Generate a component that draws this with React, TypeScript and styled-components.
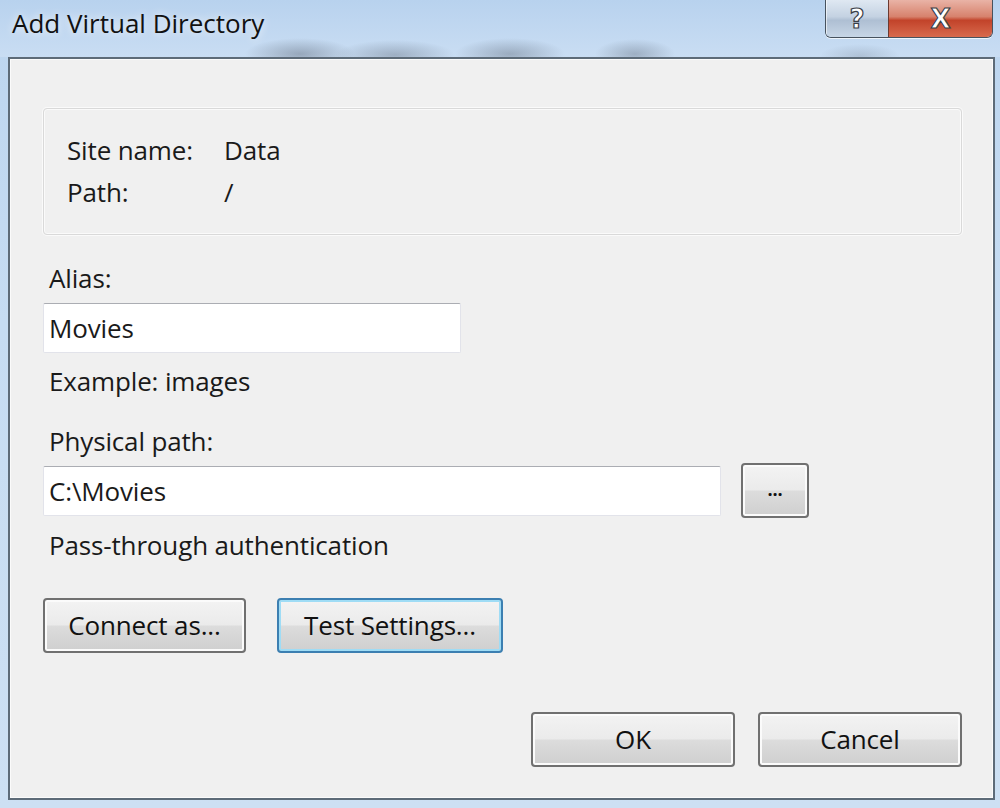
import React from "react";
import styled, { createGlobalStyle, css } from "styled-components";

const GlobalStyle = createGlobalStyle`
  html, body { margin: 0; padding: 0; }
  body {
    width: 1000px;
    height: 808px;
    overflow: hidden;
    font-family: "Open Sans", "Noto Sans", sans-serif;
    color: #1a1a1a;
  }
`;

const Window = styled.div`
  width: 1000px;
  height: 808px;
  display: flex;
  flex-direction: column;
  background: linear-gradient(180deg, #bcd5ef 0%, #c6dcf2 40%, #cde0f3 100%);
  box-sizing: border-box;
`;

const TitleBar = styled.div`
  height: 57px;
  flex: none;
  display: flex;
  justify-content: space-between;
  align-items: flex-start;
  background:
    radial-gradient(ellipse 55px 16px at 300px 54px, rgba(60, 70, 85, 0.35), transparent),
    radial-gradient(ellipse 60px 15px at 395px 55px, rgba(60, 70, 85, 0.3), transparent),
    radial-gradient(ellipse 55px 16px at 510px 54px, rgba(60, 70, 85, 0.32), transparent),
    radial-gradient(ellipse 40px 15px at 635px 54px, rgba(60, 70, 85, 0.3), transparent),
    radial-gradient(ellipse 40px 12px at 860px 56px, rgba(60, 70, 85, 0.18), transparent),
    linear-gradient(180deg, #b8d2ee 0%, #c9ddf3 100%);
`;

const Title = styled.div`
  padding: 5px 0 0 12px;
  font-size: 26px;
  letter-spacing: 0;
  color: #111;
  text-shadow: 0 0 8px rgba(255, 255, 255, 0.9);
`;

const CaptionButtons = styled.div`
  display: flex;
  margin-right: 7px;
  border: 1px solid #47525e;
  border-top: none;
  border-radius: 0 0 6px 6px;
  overflow: hidden;
  height: 37px;
  box-shadow: 0 1px 0 rgba(255, 255, 255, 0.7);
`;

const CaptionButton = styled.div<{ $close?: boolean }>`
  display: flex;
  align-items: center;
  justify-content: center;
  font-family: "DejaVu Sans", sans-serif;
  font-weight: bold;
  color: #fff;
  font-size: 26px;
  -webkit-text-stroke: 1.2px #3a3f47;
  ${(p) =>
    p.$close
      ? css`
          width: 103px;
          background: linear-gradient(180deg, #e9b3a6 0%, #d7826d 45%, #c2432a 55%, #d86a4d 100%);
          border-left: 1px solid #6b3a30;
        `
      : css`
          width: 62px;
          background: linear-gradient(180deg, #dfe8f2 0%, #c4d2e2 45%, #aebfd3 55%, #c7d6e6 100%);
          box-shadow: inset 1px 0 0 rgba(255,255,255,0.6);
        `}
`;

const Client = styled.div`
  margin: 0 5px 8px 8px;
  flex: 1;
  border: 2px solid #5d6b78;
  box-shadow: inset 0 0 0 1px #fbfbfb;
  background: #f0f0f0;
  display: flex;
  flex-direction: column;
  padding: 49px 31px 0 33px;
  font-size: 26px;
  letter-spacing: -0.15px;
`;

const GroupBox = styled.div`
  width: 919px;
  height: 127px;
  box-sizing: border-box;
  border: 1px solid #d9d9d9;
  border-radius: 4px;
  box-shadow: inset 0 0 0 1px #fafafa, 0 0 0 1px #fafafa;
  display: grid;
  grid-template-columns: 157px 1fr;
  grid-auto-rows: 42px;
  align-content: start;
  padding: 20px 0 0 23px;
`;

const Cell = styled.div`
  line-height: 42px;
  white-space: nowrap;
`;

const Label = styled.div<{ $mt: number }>`
  margin: ${(p) => p.$mt}px 0 0 6px;
  line-height: 30px;
  white-space: nowrap;
`;

const TextBox = styled.div<{ $w: number }>`
  width: ${(p) => p.$w}px;
  height: 50px;
  box-sizing: border-box;
  background: #fff;
  border: 1px solid #e2e3ea;
  border-top-color: #abadb3;
  border-radius: 2px;
  padding-left: 5px;
  display: flex;
  align-items: center;
  white-space: nowrap;
`;

const Row = styled.div<{ $mt: number; $end?: boolean; $gap: number }>`
  display: flex;
  align-items: center;
  margin-top: ${(p) => p.$mt}px;
  gap: ${(p) => p.$gap}px;
  justify-content: ${(p) => (p.$end ? "flex-end" : "flex-start")};
`;

const Button = styled.div<{ $w: number; $focus?: boolean; $small?: boolean }>`
  width: ${(p) => p.$w}px;
  height: 55px;
  box-sizing: border-box;
  border-radius: 4px;
  display: flex;
  align-items: center;
  justify-content: center;
  white-space: nowrap;
  font-size: ${(p) => (p.$small ? "18px" : "26px")};
  font-weight: ${(p) => (p.$small ? "bold" : "normal")};
  color: #111;
  padding-bottom: ${(p) => (p.$small ? "4px" : "2px")};
  background: linear-gradient(180deg, #f3f3f3 0%, #ebebeb 48%, #dcdcdc 52%, #cfcfcf 100%);
  ${(p) =>
    p.$focus
      ? css`
          border: 2px solid #3c7fb1;
          box-shadow: inset 0 0 0 2px #9fdcf5;
        `
      : css`
          border: 2px solid #707070;
          box-shadow: inset 0 0 0 2px #fbfbfb;
        `}
`;

export default function App() {
  return (
    <>
      <GlobalStyle />
      <Window>
        <TitleBar>
          <Title>Add Virtual Directory</Title>
          <CaptionButtons>
            <CaptionButton>?</CaptionButton>
            <CaptionButton $close>X</CaptionButton>
          </CaptionButtons>
        </TitleBar>
        <Client>
          <GroupBox>
            <Cell>Site name:</Cell>
            <Cell>Data</Cell>
            <Cell>Path:</Cell>
            <Cell>/</Cell>
          </GroupBox>
          <Label $mt={28}>Alias:</Label>
          <Row $mt={10} $gap={0}>
            <TextBox $w={418}>Movies</TextBox>
          </Row>
          <Label $mt={13}>Example: images</Label>
          <Label $mt={30}>Physical path:</Label>
          <Row $mt={7} $gap={20}>
            <TextBox $w={678}>C:\Movies</TextBox>
            <Button $w={68} $small>...</Button>
          </Row>
          <Label $mt={12}>Pass-through authentication</Label>
          <Row $mt={38} $gap={31}>
            <Button $w={203}>Connect as...</Button>
            <Button $w={226} $focus>Test Settings...</Button>
          </Row>
          <Row $mt={59} $gap={23} $end>
            <Button $w={204}>OK</Button>
            <Button $w={204}>Cancel</Button>
          </Row>
        </Client>
      </Window>
    </>
  );
}
